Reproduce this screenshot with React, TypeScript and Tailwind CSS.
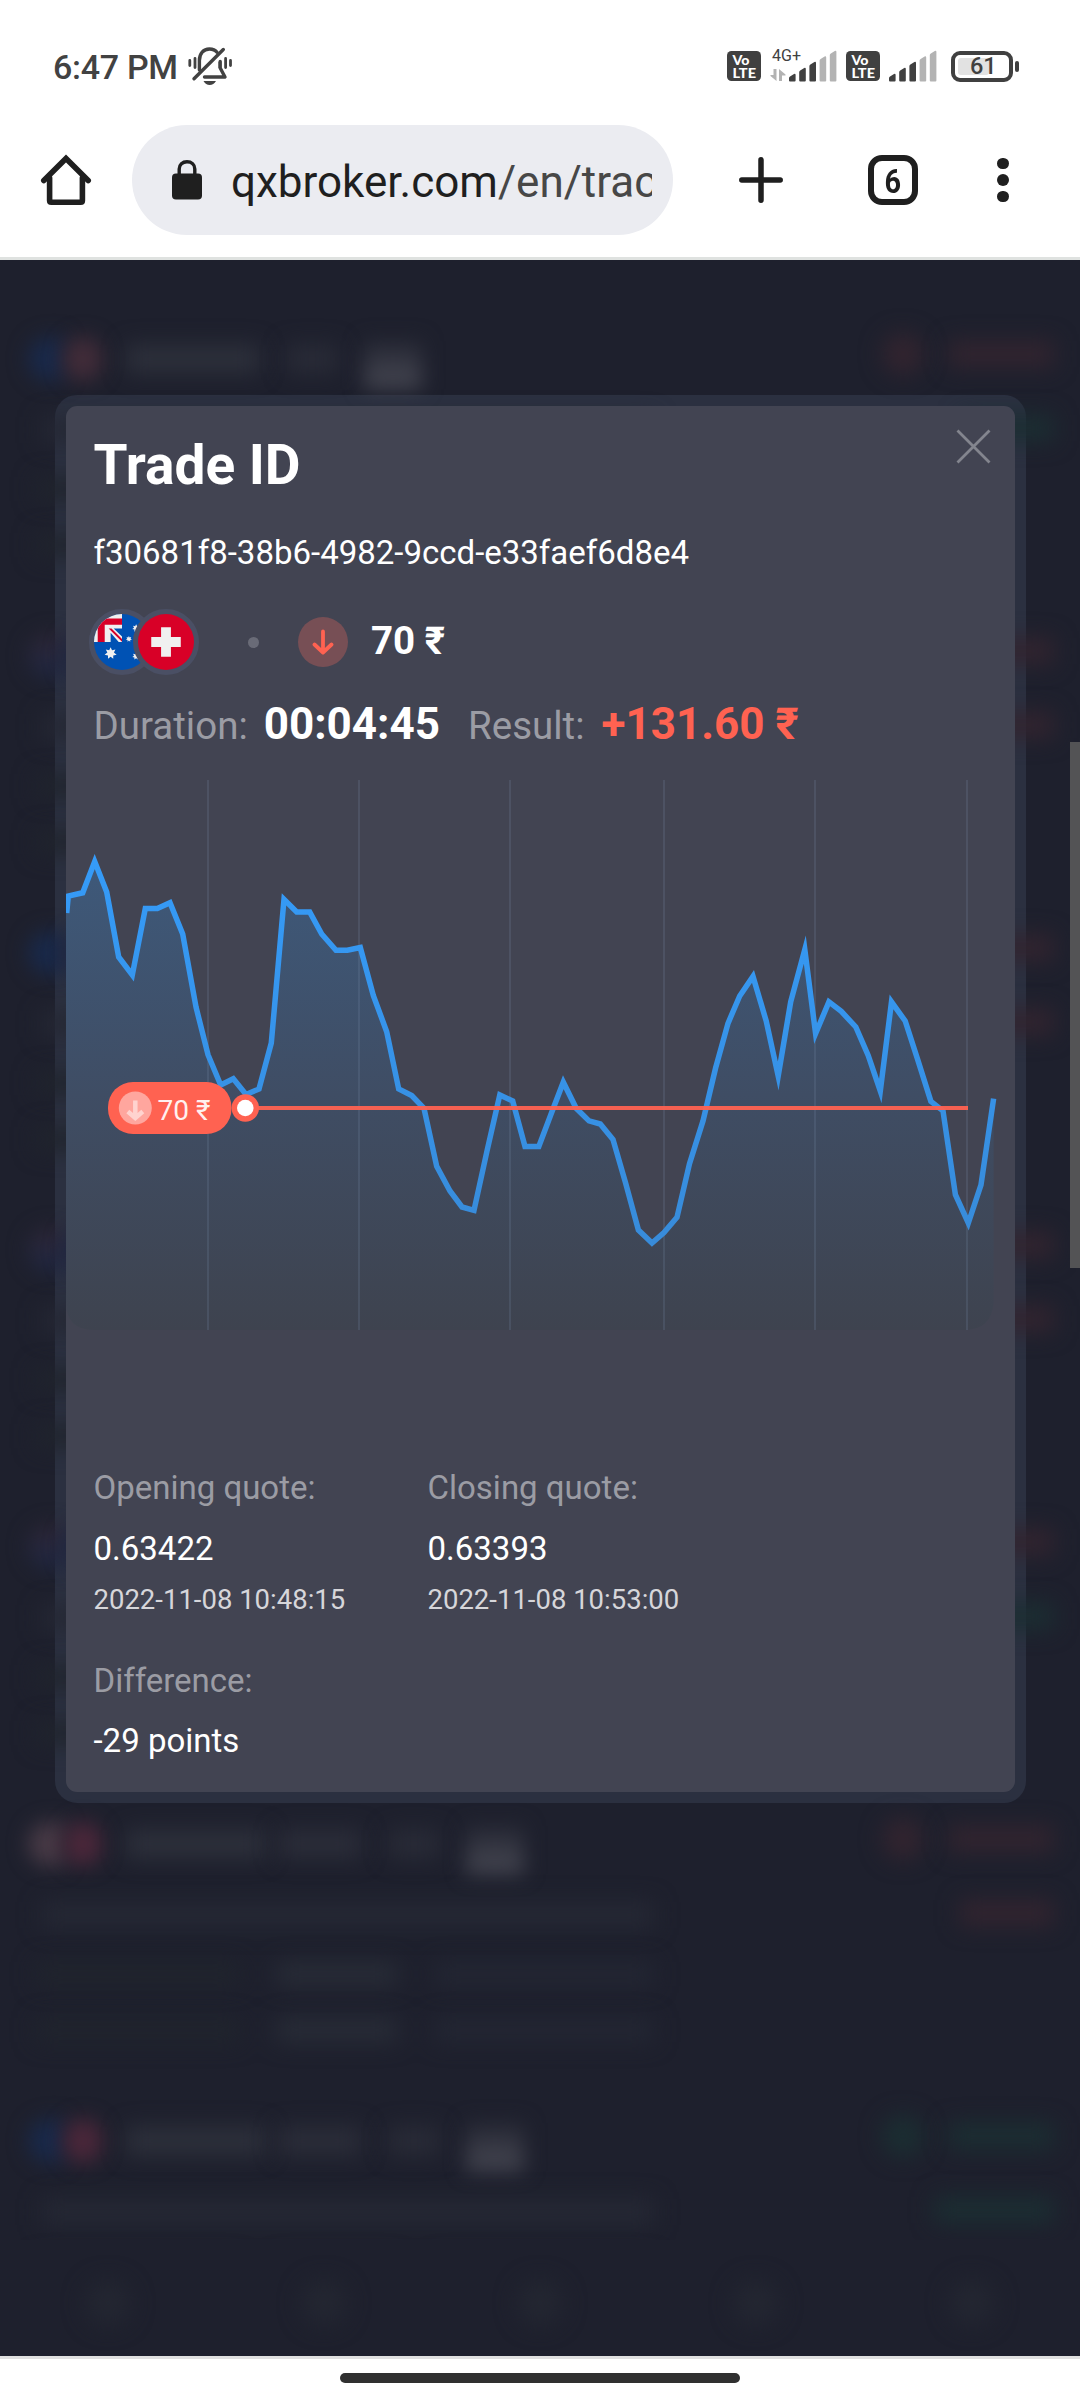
import React from "react";

const LINE_POINTS: [number, number][] = [
  [66.7, 913], [68.3, 896], [82.7, 892.8], [94.7, 861.5], [106.7, 892], [118.7, 957], [132.3, 975],
  [145.3, 908.5], [157.3, 908.5], [170, 902.7], [182.7, 934], [196, 1007], [208, 1054.7], [220.7, 1085],
  [233.3, 1078.8], [246, 1094.5], [259, 1089], [271.3, 1043], [284, 899.3], [296.7, 912], [309.7, 912],
  [321.7, 934], [336, 950.2], [347.3, 950.2], [360.3, 947.5], [373.3, 995.4], [386.7, 1031.7],
  [398.7, 1089], [411.7, 1095.6], [424, 1108.3], [436.7, 1166.4], [450, 1191], [462, 1207],
  [474, 1210.4], [487, 1151], [499.8, 1094.9], [512.7, 1101], [525, 1146.5], [538.8, 1146.5],
  [550.8, 1114.8], [563.3, 1082.2], [576.2, 1108.3], [589, 1120.9], [600.3, 1124], [613, 1139.6],
  [625.6, 1182.9], [638.4, 1230], [652, 1243], [664, 1232.6], [677, 1217.3], [689.5, 1163.7],
  [703, 1120.9], [715.6, 1068], [728, 1023.3], [739.7, 996], [753, 976.4], [766.2, 1021],
  [778.2, 1076], [790.7, 1001.9], [804.8, 949.6], [815.6, 1033.6], [828.9, 1001.9], [841.3, 1011.4],
  [855.8, 1027], [868.2, 1055.4], [880.3, 1091], [891.5, 1001.9], [905.2, 1021], [917.7, 1059.7],
  [930.9, 1101.4], [943, 1110.9], [955.4, 1194.7], [968.3, 1223], [981, 1184.8], [993.6, 1098.7],
];

const OX = 66;
const OY = 780;
const line = LINE_POINTS.map(([x, y]) => `${(x - OX).toFixed(1)},${(y - OY).toFixed(1)}`).join(" ");
const area = `M0,133 L${line.replace(/ /g, " L")} V522 Q926,550 898,550 H28 Q0,550 0,522 Z`;
const GRID = [207, 358.4, 509.6, 663.6, 814.6, 966];

function MutedBell() {
  return (
    <svg className="ml-[9px] h-[40px] w-[46px]" viewBox="0 0 46 40" fill="none" stroke="#424242" strokeWidth="3.4" strokeLinecap="round">
      <path d="M12.4 24V14.500C12.400 7.500 16.500 3 22.400 3C26 3 28.500 4.300 30 6.300" />
      <path d="M36.300 3.500L7 32.800" />
      <path d="M33.200 15.500V22L38 31H17.500" strokeLinejoin="round" />
      <path d="M31.500 16L34 14V22H31.500Z" fill="#424242" stroke="none" />
      <path d="M16.500 35H29C27.500 37.500 25.300 39 22.700 39S18 37.500 16.500 35Z" fill="#424242" stroke="none" />
      <path d="M2.800 14.500V19.500M8 12.500V21.500M38.600 12.500V21.500M43.500 14.500V19.500" strokeWidth="2.800" />
    </svg>
  );
}

function VoLte() {
  return (
    <svg className="h-[30px] w-[34px]" viewBox="0 0 34 30">
      <rect width="34" height="30" rx="4.500" fill="#404040" />
      <g fill="#fff" fontFamily="Lato, sans-serif" fontWeight="900">
        <text x="5.500" y="14.300" fontSize="13.500" textLength="17" lengthAdjust="spacingAndGlyphs">Vo</text>
        <text x="5.500" y="26.600" fontSize="13" textLength="23.500" lengthAdjust="spacingAndGlyphs">LTE</text>
      </g>
    </svg>
  );
}

function SignalBars() {
  const tops = [24, 18, 12, 6.5, 1];
  return (
    <svg className="h-[32px] w-[48px]" viewBox="0 0 48 32">
      {tops.map((t, i) => (
        <path
          key={t}
          d={`M${i * 10.2} ${t + 4}Q${i * 10.2} ${t + 3} ${i * 10.2 + 1} ${t + 2.400}L${i * 10.2 + 5} ${t}Q${i * 10.2 + 6.600} ${t - 0.600} ${i * 10.2 + 6.600} ${t + 1}V30.500Q${i * 10.2 + 6.600} 31.500 ${i * 10.2 + 5.600} 31.500H${i * 10.2 + 1}Q${i * 10.2} 31.500 ${i * 10.2} 30.500Z`}
          fill={i < 3 ? "#404040" : "#b3b3b3"}
        />
      ))}
    </svg>
  );
}

function Battery() {
  return (
    <div className="ml-[5px] flex items-center gap-[2px]">
      <div className="flex h-[31px] w-[62px] items-center rounded-[9px] border-4 border-[#404040] px-[3px]">
        <div className="flex h-[17px] w-[31px] items-center rounded-[3px] bg-[#e2e2e2] pl-[12px] pt-[2px] text-[23.500px] font-medium leading-none text-[#404040]">
          61
        </div>
      </div>
      <div className="h-[11px] w-[4px] rounded-[2px] bg-[#404040]" />
    </div>
  );
}

function StatusBar() {
  return (
    <div className="flex h-[125px] items-center pl-[53px] pr-[61px] pt-[7px]">
      <span className="whitespace-nowrap pt-[2px] text-[34px] font-medium leading-none tracking-[-0.300px] text-[#424242]">6:47 PM</span>
      <MutedBell />
      <div className="ml-auto flex items-center gap-[9px]">
        <VoLte />
        <div className="grid w-[67px]">
          <div className="col-start-1 row-start-1 -mt-[2px] flex flex-col">
            <span className="pl-[2px] text-[16px] leading-[16px] text-[#404040]">4G+</span>
            <svg className="mt-[5px] h-[12px] w-[17px]" viewBox="0 0 17 12" fill="#b3b3b3">
              <path d="M3.500 0H6.500V12L0.500 7V6H3.500ZM9 0L15.500 5.500V6.500H12V12H9Z" />
            </svg>
          </div>
          <div className="col-start-1 row-start-1 justify-self-end">
            <SignalBars />
          </div>
        </div>
        <VoLte />
        <SignalBars />
        <Battery />
      </div>
    </div>
  );
}

function BrowserBar() {
  return (
    <div className="flex h-[110px] items-center">
      <svg className="ml-[40px] h-[52px] w-[52px]" viewBox="0 0 52 52" fill="none" stroke="#1f1f1f" strokeWidth="5.600" strokeLinejoin="round" strokeLinecap="round">
        <path d="M3.800 26.500L26 4.500L48.200 26.500" strokeLinejoin="miter" />
        <path d="M9.600 24V46.500Q9.600 48.200 11.300 48.200H40.700Q42.400 48.200 42.400 46.500V24" />
      </svg>
      <div className="ml-[40px] flex h-[110px] w-[541px] items-center rounded-full bg-[#ebecf1] pl-[40px]">
        <svg className="h-[40px] w-[30px]" viewBox="0 0 30 40">
          <rect y="13.500" width="30" height="26" rx="4" fill="#1f1f1f" />
          <path d="M7.200 15V9C7.200 4.800 10.500 1.800 15 1.800S22.800 4.800 22.800 9V15" fill="none" stroke="#1f1f1f" strokeWidth="3.400" />
        </svg>
        <div className="ml-[29px] w-[421px] overflow-hidden whitespace-nowrap pt-[3px] text-[44px] leading-[60px] text-[#1f1f1f]">
          qxbroker.com<span className="text-[#474747]">/en/trac</span>
        </div>
      </div>
      <svg className="ml-[66px] h-[46px] w-[44px]" viewBox="0 0 44 46" stroke="#1f1f1f" strokeWidth="5.500" strokeLinecap="round">
        <path d="M22 2.800V43.200M2.800 23H41.200" />
      </svg>
      <div className="ml-[85px] flex h-[50px] w-[50px] items-center justify-center rounded-[14px] border-[6px] border-[#1f1f1f] pt-[1px] text-[34px] font-bold leading-none text-[#1f1f1f]">
        <span className="scale-x-85">6</span>
      </div>
      <div className="ml-[79px] flex flex-col gap-[5px]">
        <div className="size-[11.500px] rounded-full bg-[#1f1f1f]" />
        <div className="size-[11.500px] rounded-full bg-[#1f1f1f]" />
        <div className="size-[11.500px] rounded-full bg-[#1f1f1f]" />
      </div>
    </div>
  );
}

type Row = { a: string; b: string; wide: boolean; top: string; bottom: string };
const RED = "bg-[#32242f]";
const GREEN = "bg-[#1b2e32]";
const BLUE = "bg-[#19294a]";
const CRIMSON = "bg-[#4b273a]";
const ROWS: Row[] = [
  { a: BLUE, b: "bg-[#422c39]", wide: false, top: RED, bottom: GREEN },
  { a: "bg-gradient-to-b from-[#2f2635] to-[#1d2744]", b: "bg-[#1d2440]", wide: true, top: RED, bottom: RED },
  { a: BLUE, b: "bg-[#1d2440]", wide: true, top: RED, bottom: RED },
  { a: "bg-gradient-to-b from-[#2f2635] to-[#1d2744]", b: "bg-[#1d2440]", wide: true, top: RED, bottom: RED },
  { a: "bg-gradient-to-b from-[#2f2635] to-[#1d2744]", b: "bg-[#1d2440]", wide: true, top: RED, bottom: GREEN },
  { a: "bg-[#483a46]", b: CRIMSON, wide: true, top: RED, bottom: RED },
  { a: BLUE, b: CRIMSON, wide: true, top: GREEN, bottom: GREEN },
];

function HistoryRow({ row }: { row: Row }) {
  return (
    <div className="flex h-[297px] shrink-0 justify-between pl-[28px] pr-[26px]">
      <div className="flex flex-col">
        <div className="flex h-[44px] items-center">
          <div className={`h-[44px] w-[36px] rounded-l-full blur-[10px] ${row.a}`} />
          <div className={`h-[44px] w-[38px] rounded-full blur-[10px] ${row.b}`} />
          <div className={row.wide ? "ml-[24px] h-[28px] w-[140px] bg-[#2d303b] blur-[11px]" : "ml-[24px] h-[28px] w-[134px] bg-[#2d303b] blur-[11px]"} />
          {row.wide && <div className="ml-[12px] h-[28px] w-[84px] bg-[#2b2d39] blur-[11px]" />}
          <div className="ml-[26px] h-[28px] w-[52px] bg-[#292b37] blur-[11px]" />
          <div className="ml-[26px] mt-[12px] h-[48px] w-[58px] bg-gradient-to-b from-[#262834] to-[#484954] blur-[10px]" />
        </div>
        <div className="ml-[14px] mt-[36px] h-[26px] w-[612px] bg-[#252834] blur-[11px]" />
        <div className="ml-[8px] mt-[34px] flex h-[24px] gap-[36px] blur-[11px]">
          <div className="w-[204px] bg-[#20242d]" />
          <div className="w-[122px] bg-[#282c37]" />
          <div className="w-[220px] bg-[#232633]" />
        </div>
        <div className="ml-[8px] mt-[32px] flex h-[24px] gap-[36px] blur-[11px]">
          <div className="w-[204px] bg-[#20242d]" />
          <div className="w-[122px] bg-[#282c37]" />
          <div className="w-[220px] bg-[#232633]" />
        </div>
      </div>
      <div className="flex flex-col items-end">
        <div className="flex h-[34px] items-center gap-[24px]">
          <div className={`size-[42px] rounded-full blur-[11px] ${row.top}`} />
          <div className={`h-[26px] w-[106px] blur-[11px] ${row.top}`} />
        </div>
        <div className={`mt-[44px] h-[26px] blur-[11px] ${row.top === GREEN ? "w-[120px]" : "w-[94px]"} ${row.bottom}`} />
      </div>
    </div>
  );
}

function BlurredPage() {
  return (
    <div className="flex h-[2096px] flex-col overflow-hidden [grid-area:1/1]">
      <div className="flex h-[1980px] shrink-0 flex-col overflow-hidden pt-[77px]">
        {ROWS.map((row, i) => (
          <HistoryRow key={i} row={row} />
        ))}
      </div>
      <div className="flex h-[116px] justify-around pt-[40px]">
        {[0, 1, 2, 3, 4].map((i) => (
          <div key={i} className="size-[46px] rounded-full bg-[#232631] blur-[11px]" />
        ))}
      </div>
    </div>
  );
}

function AustraliaFlag() {
  const star = (cx: number, cy: number, r: number) => {
    const pts: string[] = [];
    for (let i = 0; i < 14; i++) {
      const q = i % 2 ? r * 0.55 : r;
      const t = (Math.PI * i) / 7 - Math.PI / 2;
      pts.push(`${(cx + q * Math.cos(t)).toFixed(0)},${(cy + q * Math.sin(t)).toFixed(0)}`);
    }
    return <polygon points={pts.join(" ")} fill="#f0f0f0" />;
  };
  return (
    <svg className="size-full" viewBox="0 0 512 512">
      <defs>
        <clipPath id="au">
          <circle cx="256" cy="256" r="256" />
        </clipPath>
      </defs>
      <g clipPath="url(#au)">
        <rect width="512" height="512" fill="#0052b4" />
        <rect width="256" height="256" fill="#f0f0f0" />
        <path d="M34 256V40H256V98H98V256Z" fill="#d80027" />
        <path d="M152 172L226 256H152ZM180 132H256V205Z" fill="#0052b4" />
        <path d="M134 132H160L256 228V254Z" fill="#d80027" />
        {star(152, 360, 56)}
        {star(319, 228, 28)}
        {star(385, 130, 36)}
        {star(385, 385, 36)}
      </g>
    </svg>
  );
}

function PairFlags() {
  return (
    <div className="flex">
      <div className="size-[66px] rounded-full border-[5.500px] border-[#4a4f64] bg-[#4a4f64]">
        <AustraliaFlag />
      </div>
      <div className="-ml-[22px] size-[66px] rounded-full border-[5.500px] border-[#4a4f64] bg-[#4a4f64]">
        <svg className="size-full" viewBox="0 0 512 512">
          <circle cx="256" cy="256" r="256" fill="#d80027" />
          <path d="M211 121H301V211H391V301H301V391H211V301H121V211H211Z" fill="#f0f0f0" />
        </svg>
      </div>
    </div>
  );
}

function Chart() {
  return (
    <svg className="mt-[28px] h-[550px] w-[949px] font-[Roboto,sans-serif]" viewBox="0 0 949 550">
      <defs>
        <linearGradient id="fill" gradientUnits="userSpaceOnUse" x1="0" y1="80" x2="0" y2="550">
          <stop offset="0" stopColor="#3e597a" />
          <stop offset="0.500" stopColor="#3f4d64" />
          <stop offset="1" stopColor="#3e434f" />
        </linearGradient>
        <linearGradient id="stroke" gradientUnits="userSpaceOnUse" x1="0" y1="80" x2="0" y2="470">
          <stop offset="0" stopColor="#359bf8" />
          <stop offset="1" stopColor="#388bd9" />
        </linearGradient>
      </defs>
      <path d={area} fill="url(#fill)" />
      {GRID.map((x) => (
        <rect key={x} x={Math.floor(x - OX)} y="0" width="2" height="550" fill="#7889a5" fillOpacity="0.210" />
      ))}
      <polyline points={line} fill="none" stroke="url(#stroke)" strokeWidth="5.500" strokeMiterlimit="10" />
      <rect x="179" y="326" width="723" height="4" fill="#ff6251" fillOpacity="0.950" />
      <rect x="42" y="302" width="123.500" height="52" rx="25" fill="#ff6251" />
      <circle cx="69.300" cy="328" r="16.500" fill="#ffa69e" />
      <path d="M69.300 320.500V337M61.800 331.500L69.300 338L76.800 331.500" fill="none" stroke="#ffd3cf" strokeWidth="4.500" />
      <text x="91.500" y="340" fontSize="28" fill="#fff0ee">70 ₹</text>
      <circle cx="179.300" cy="328" r="13.700" fill="#ff6251" />
      <circle cx="179.300" cy="328" r="8.300" fill="#fff" />
    </svg>
  );
}

function Quote({ label, value, date }: { label: string; value: string; date?: string }) {
  return (
    <div className="flex flex-col text-[33px] leading-[38px]">
      <span className="text-[#9b9ca4]">{label}</span>
      <span className={date ? "mt-[23px] text-white" : "mt-[22px] text-white"}>{value}</span>
      {date && <span className="mt-[16px] text-[27.500px] leading-[32px] text-[#d6d6da]">{date}</span>}
    </div>
  );
}

function TradeDialog() {
  return (
    <div className="ml-[55px] mt-[135px] h-[1408px] w-[971px] rounded-[22px] border-[11px] border-[#2b3040] bg-[#2b3040] [grid-area:1/1]">
      <div className="relative flex h-full flex-col overflow-hidden rounded-[11px] bg-[#424452] pt-[27px]">
        <svg className="absolute right-[24px] top-[23px] size-[35px]" viewBox="0 0 35 35" stroke="#83858e" strokeWidth="2.800">
          <path d="M1.500 1.500L33.500 33.500M33.500 1.500L1.500 33.500" />
        </svg>
        <div className="flex flex-col pl-[27.500px]">
          <h1 className="text-[55px] font-bold leading-[64px] text-white">Trade ID</h1>
          <p className="mt-[37px] text-[33px] leading-[38px] text-white">f30681f8-38b6-4982-9ccd-e33faef6d8e4</p>
          <div className="-ml-[5px] mt-[37px] flex h-[66px] items-center">
            <PairFlags />
            <div className="ml-[49.500px] size-[11px] rounded-full bg-[#696b77]" />
            <div className="ml-[39px] flex size-[50px] items-center justify-center rounded-full bg-[#774f55]">
              <svg className="size-[26px]" viewBox="0 0 26 26" fill="none" stroke="#ff6251" strokeWidth="3.800" strokeLinecap="round" strokeLinejoin="round">
                <path d="M13 2.500V23M4.500 15.500L13 23.500L21.500 15.500" />
              </svg>
            </div>
            <span className="ml-[23px] pb-[2px] text-[38.500px] font-bold leading-[46px] text-white">70 ₹</span>
          </div>
          <div className="mt-[23px] flex items-baseline whitespace-nowrap text-[38.500px] leading-[52px] text-[#9b9ca4]">
            <span>Duration:</span>
            <span className="ml-[16px] text-[44px] font-bold text-white">00:04:45</span>
            <span className="ml-[28px]">Result:</span>
            <span className="ml-[17px] text-[44px] font-bold text-[#ff6251]">+131.60 ₹</span>
          </div>
        </div>
        <Chart />
        <div className="mt-[139px] grid grid-cols-[334px_1fr] gap-y-[46px] pl-[27.500px]">
          <Quote label="Opening quote:" value="0.63422" date="2022-11-08 10:48:15" />
          <Quote label="Closing quote:" value="0.63393" date="2022-11-08 10:53:00" />
          <Quote label="Difference:" value="-29 points" />
        </div>
      </div>
    </div>
  );
}

export default function App() {
  return (
    <div className="flex h-[2400px] w-[1080px] flex-col overflow-hidden bg-white font-[Roboto,'Noto_Sans',sans-serif]">
      <header className="h-[260px] border-b-[3px] border-[#dfe2e0]">
        <StatusBar />
        <BrowserBar />
      </header>
      <main className="relative grid h-[2096px] grid-cols-1 bg-[#1e202d]">
        <BlurredPage />
        <TradeDialog />
        <div className="absolute right-0 top-[482px] h-[526px] w-[10px] bg-[#535355]" />
      </main>
      <footer className="flex h-[44px] justify-center border-t-[3px] border-[#e0e0e0] pt-[14px]">
        <div className="h-[10px] w-[400px] rounded-full bg-[#303030]" />
      </footer>
    </div>
  );
}
